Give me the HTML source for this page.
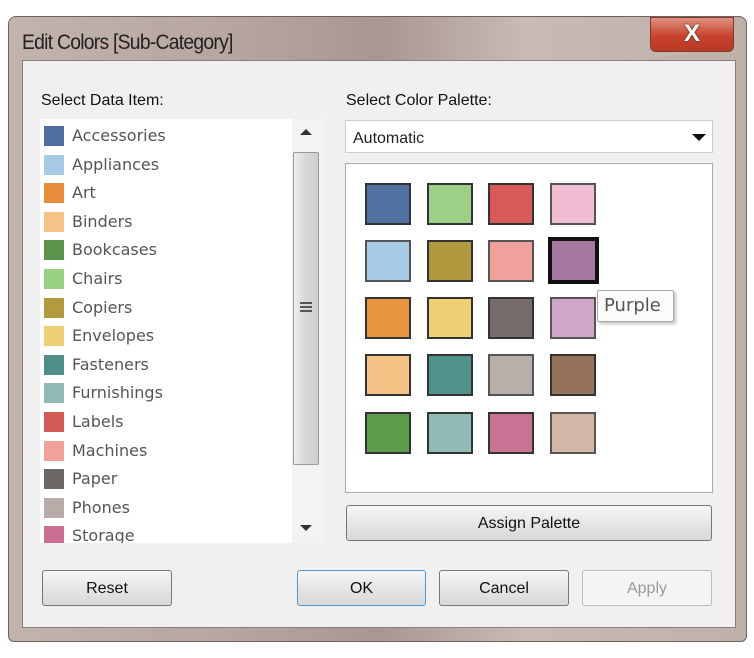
<!DOCTYPE html>
<html><head><style>
*{box-sizing:border-box;margin:0;padding:0}
body{width:754px;height:658px;background:#fff;position:relative;overflow:hidden;font-family:"Liberation Sans","DejaVu Sans",sans-serif}
.abs{position:absolute}
.frame{left:8px;top:16px;width:739px;height:626px;border-radius:8px 8px 6px 6px;background:linear-gradient(90deg,#c2b3ad 0%,#b7a6a0 30%,#a99690 50%,#c8bab5 70%,#bfb0aa 100%);border:1px solid #6f625e}
.title{left:22px;top:31px;font-size:21px;color:#222;letter-spacing:-0.8px;transform:scaleX(0.92);transform-origin:left}
.close{left:650px;top:17px;width:84px;height:35px;border-radius:0 0 6px 6px;background:linear-gradient(#e0917f,#c8432d 55%,#b73a25);border:1px solid #7a3a30;color:#fff;font-size:24px;font-weight:bold;text-align:center;line-height:32px;text-shadow:0 0 2px #333}
.client{left:22px;top:60px;width:714px;height:568px;background:#f0f0f0;border:1px solid #8a7d78}
.lbl{font-size:16px;color:#111}
.list{left:40px;top:119px;width:252px;height:424px;background:#fff;overflow:hidden}
.item{position:absolute;left:4px;height:22px;font-family:"DejaVu Sans",sans-serif;font-size:16px;color:#555}
.item i{position:absolute;left:0;top:2px;width:20px;height:20px}
.item span{position:absolute;left:28px;top:2px;white-space:nowrap}
.sb{left:292px;top:119px;width:30px;height:424px;background:#f3f3f3}
.thumb{left:293px;top:152px;width:26px;height:313px;border:1px solid #999;border-radius:2px;background:linear-gradient(90deg,#eee,#d6d6d6 50%,#cfcfcf)}
.dd{left:345px;top:120px;width:368px;height:33px;background:#fff;border:1px solid #ccc;font-size:16px;color:#222;padding:9px 7px}
.panel{left:345px;top:163px;width:368px;height:330px;background:#fff;border:1px solid #aaa}
.sw{position:absolute;width:46px;height:42px;border:2px solid #333}
.btn{position:absolute;height:36px;border:1px solid #777;border-radius:3px;background:linear-gradient(#f6f6f6,#e6e6e6 50%,#d8d8d8);font-size:16px;color:#111;text-align:center;line-height:36px}
</style></head><body>
<div class="abs frame"></div>
<div class="abs title">Edit Colors [Sub-Category]</div>
<div class="abs close">X</div>
<div class="abs client"></div>
<div class="abs lbl" style="left:41px;top:92px">Select Data Item:</div>
<div class="abs lbl" style="left:346px;top:92px">Select Color Palette:</div>
<div class="abs list">
<div class="item" style="top:5px"><i style="background:#4e6fa0"></i><span>Accessories</span></div>
<div class="item" style="top:34px"><i style="background:#a6cbe6"></i><span>Appliances</span></div>
<div class="item" style="top:62px"><i style="background:#e88e3a"></i><span>Art</span></div>
<div class="item" style="top:91px"><i style="background:#f6c287"></i><span>Binders</span></div>
<div class="item" style="top:119px"><i style="background:#5b954b"></i><span>Bookcases</span></div>
<div class="item" style="top:148px"><i style="background:#96d080"></i><span>Chairs</span></div>
<div class="item" style="top:177px"><i style="background:#b39a3e"></i><span>Copiers</span></div>
<div class="item" style="top:205px"><i style="background:#edd074"></i><span>Envelopes</span></div>
<div class="item" style="top:234px"><i style="background:#4f8f89"></i><span>Fasteners</span></div>
<div class="item" style="top:262px"><i style="background:#8fbab5"></i><span>Furnishings</span></div>
<div class="item" style="top:291px"><i style="background:#d45a55"></i><span>Labels</span></div>
<div class="item" style="top:320px"><i style="background:#f2a09a"></i><span>Machines</span></div>
<div class="item" style="top:348px"><i style="background:#6e6865"></i><span>Paper</span></div>
<div class="item" style="top:377px"><i style="background:#b9ada9"></i><span>Phones</span></div>
<div class="item" style="top:405px"><i style="background:#c96f93"></i><span>Storage</span></div>
</div>
<div class="abs sb"></div>
<div class="abs" style="left:300px;top:129px;width:0;height:0;border-left:6px solid transparent;border-right:6px solid transparent;border-bottom:6px solid #333"></div>
<div class="abs thumb"></div>
<div class="abs" style="left:300px;top:302px;width:12px;height:10px;border-top:2px solid #555;border-bottom:2px solid #555"><div style="margin-top:2px;height:2px;background:#555"></div></div>
<div class="abs" style="left:300px;top:525px;width:0;height:0;border-left:6px solid transparent;border-right:6px solid transparent;border-top:6px solid #333"></div>
<div class="abs dd">Automatic</div>
<div class="abs" style="left:692px;top:134px;width:0;height:0;border-left:7px solid transparent;border-right:7px solid transparent;border-top:7px solid #111"></div>
<div class="abs panel">
<div class="sw" style="left:19px;top:19px;background:#50709f"></div>
<div class="sw" style="left:81px;top:19px;background:#9bd086"></div>
<div class="sw" style="left:142px;top:19px;background:#d65b58"></div>
<div class="sw" style="left:204px;top:19px;background:#f0bdd2;border-color:#555"></div>
<div class="sw" style="left:19px;top:76px;background:#a6cbe6;border-color:#555"></div>
<div class="sw" style="left:81px;top:76px;background:#b0993e"></div>
<div class="sw" style="left:142px;top:76px;background:#f1a19c;border-color:#555"></div>
<div class="sw" style="left:202px;top:73px;width:51px;height:47px;background:#a5789f;border:4px solid #111"></div>
<div class="sw" style="left:19px;top:133px;background:#e89540"></div>
<div class="sw" style="left:81px;top:133px;background:#eed175"></div>
<div class="sw" style="left:142px;top:133px;background:#766d6a"></div>
<div class="sw" style="left:204px;top:133px;background:#d0a6c8;border-color:#555"></div>
<div class="sw" style="left:19px;top:190px;background:#f6c185"></div>
<div class="sw" style="left:81px;top:190px;background:#509189"></div>
<div class="sw" style="left:142px;top:190px;background:#bab0ab;border-color:#555"></div>
<div class="sw" style="left:204px;top:190px;background:#97725b"></div>
<div class="sw" style="left:19px;top:248px;background:#5c9a4c"></div>
<div class="sw" style="left:81px;top:248px;background:#90bbb5"></div>
<div class="sw" style="left:142px;top:248px;background:#c87393"></div>
<div class="sw" style="left:204px;top:248px;background:#d4b6a6;border-color:#555"></div>
<div style="position:absolute;left:251px;top:126px;width:77px;height:32px;background:#fbfbfb;border:1px solid #aaa;border-radius:2px;box-shadow:2px 2px 3px rgba(0,0,0,.25);font-family:'DejaVu Sans',sans-serif;font-size:18px;color:#555;padding:4px 6px">Purple</div>
</div>
<div class="btn" style="left:346px;top:505px;width:366px">Assign Palette</div>
<div class="btn" style="left:42px;top:570px;width:130px">Reset</div>
<div class="btn" style="left:297px;top:570px;width:129px;border-color:#4a9ad6">OK</div>
<div class="btn" style="left:439px;top:570px;width:130px">Cancel</div>
<div class="btn" style="left:582px;top:570px;width:130px;border-color:#bbb;background:#f4f4f4;color:#999">Apply</div>
</body></html>
